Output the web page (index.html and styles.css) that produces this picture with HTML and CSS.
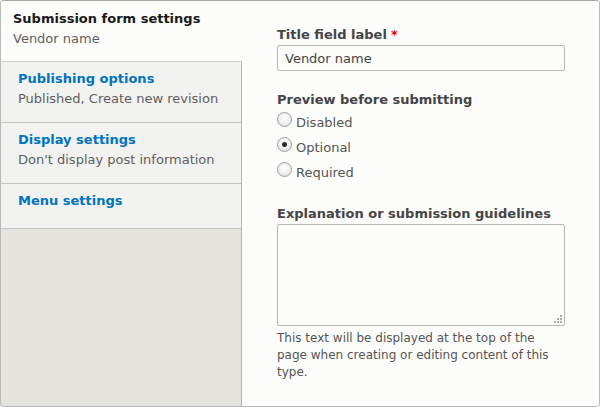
FILE: index.html
```html
<!DOCTYPE html>
<html>
<head>
<meta charset="utf-8">
<link rel="stylesheet" href="styles.css">
</head>
<body>
<div class="vtabs">
  <ul class="menu">
    <li class="tab is-selected">
      <span class="tab-title">Submission form settings</span>
      <span class="tab-summary">Vendor name</span>
    </li>
    <li class="tab">
      <span class="tab-title">Publishing options</span>
      <span class="tab-summary">Published, Create new revision</span>
    </li>
    <li class="tab">
      <span class="tab-title">Display settings</span>
      <span class="tab-summary">Don't display post information</span>
    </li>
    <li class="tab tab-short">
      <span class="tab-title">Menu settings</span>
    </li>
  </ul>
  <div class="pane">
    <label class="field-label" for="title">Title field label<span class="req">*</span></label>
    <input class="text-input" id="title" type="text" value="Vendor name">

    <div class="field-label group-label">Preview before submitting</div>
    <div class="radios">
      <label class="radio-row"><input type="radio" name="preview" class="radio"><span>Disabled</span></label>
      <label class="radio-row"><input type="radio" name="preview" class="radio" checked><span>Optional</span></label>
      <label class="radio-row"><input type="radio" name="preview" class="radio"><span>Required</span></label>
    </div>

    <label class="field-label group-label" for="help">Explanation or submission guidelines</label>
    <div class="textarea-wrap">
      <textarea class="textarea" id="help"></textarea>
      <span class="grip"></span>
    </div>
    <div class="description">This text will be displayed at the top of the page when creating or editing content of this type.</div>
  </div>
</div>
</body>
</html>
```

FILE: styles.css
```css
html, body {
  margin: 0;
  padding: 0;
}
body {
  font-family: "DejaVu Sans", "Liberation Sans", sans-serif;
  font-size: 13px;
  color: #333;
  background: #fff;
}
.vtabs {
  display: flex;
  box-sizing: border-box;
  width: 600px;
  height: 407px;
  border: 1px solid #b8b8b8;
  border-top-color: #a8a8a8;
  border-radius: 4px;
  background: #e6e4df;
  overflow: hidden;
}
.menu {
  list-style: none;
  margin: 0;
  padding: 0;
  width: 240px;
  flex: none;
  border-right: 1px solid #b3b3b3;
}
.tab {
  display: flex;
  flex-direction: column;
  box-sizing: border-box;
  height: 61px;
  padding: 7px 13px 0 17px;
  background: #f2f2f0;
  border-bottom: 1px solid #c4c4c4;
}
.tab.is-selected {
  background: #fcfcfa;
  margin-right: -1px;
  padding-left: 12px;
  padding-top: 8px;
  height: 61px;
  border-bottom-color: #d0d0d0;
}
.tab.tab-short {
  height: 45px;
}
.tab-title {
  font-weight: bold;
  line-height: 20px;
  color: #0074bd;
}
.is-selected .tab-title {
  color: #1a1a1a;
}
.tab-summary {
  line-height: 20px;
  color: #5f5f5f;
}
.pane {
  flex: 1;
  background: #fcfcfa;
  padding: 24px 0 0 35px;
  display: flex;
  flex-direction: column;
  align-items: flex-start;
}
.field-label {
  font-weight: bold;
  line-height: 20px;
  color: #454545;
}
.req {
  color: #e00;
  margin-left: 4px;
}
.text-input {
  box-sizing: border-box;
  width: 288px;
  height: 26px;
  margin: 0;
  padding: 0 7px;
  border: 1px solid #b8b8b8;
  border-radius: 2px;
  background: #fcfcfa;
  font-family: inherit;
  font-size: 13px;
  color: #444;
}
.group-label {
  margin-top: 19px;
}
.radios {
  display: flex;
  flex-direction: column;
}
.radio-row {
  display: flex;
  align-items: flex-start;
  height: 25px;
  line-height: 25px;
  color: #555;
}
.radio {
  appearance: none;
  -webkit-appearance: none;
  box-sizing: border-box;
  width: 15px;
  height: 15px;
  margin: 2px 4px 0 0;
  border: 1px solid #a0a0a0;
  border-radius: 50%;
  background: radial-gradient(circle at 50% 40%, #ffffff 0%, #f0f0f0 50%, #d6d6d6 100%);
  position: relative;
}
.radio:checked::after {
  content: "";
  position: absolute;
  left: 4px;
  top: 4px;
  width: 5px;
  height: 5px;
  border-radius: 50%;
  background: #2a2a2a;
}
.textarea-wrap {
  position: relative;
  width: 288px;
  height: 102px;
}
.textarea {
  display: block;
  box-sizing: border-box;
  width: 288px;
  height: 102px;
  margin: 0;
  border: 1px solid #b8b8b8;
  border-radius: 2px;
  background: #fcfcfa;
  resize: none;
}
.grip {
  position: absolute;
  right: 3px;
  bottom: 3px;
  width: 2px;
  height: 2px;
  background: #aaa;
  box-shadow:
    0 -3px 0 #aaa,
    0 -6px 0 #aaa,
    -3px 0 0 #aaa,
    -3px -3px 0 #aaa,
    -6px 0 0 #aaa;
}
.description {
  width: 290px;
  margin-top: 4px;
  font-size: 12px;
  line-height: 17px;
  color: #555;
}
```
